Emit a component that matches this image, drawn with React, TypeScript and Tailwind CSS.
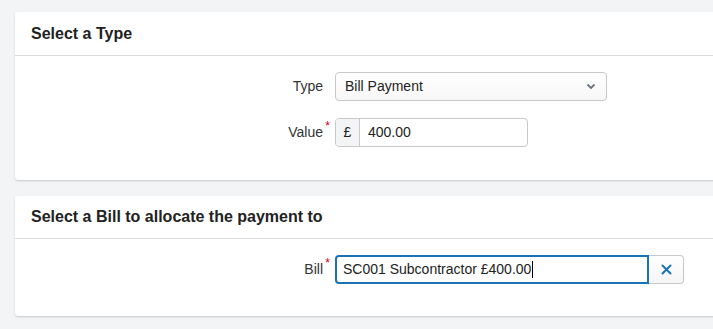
import React from "react";

const font = { fontFamily: '"Liberation Sans", Arial, sans-serif' };

function Label({ text, required }: { text: string; required?: boolean }) {
  return (
    <div className="w-[308px] shrink-0 text-right text-[14px] text-[#333]">
      <span className="relative">
        {text}
        {required && (
          <span className="absolute -right-[7px] -top-[7px] text-[12px] text-[#d0021b]">*</span>
        )}
      </span>
    </div>
  );
}

const App = () => {
  return (
    <div className="h-[329px] w-[713px] overflow-hidden bg-[#f3f4f6] pt-[12px]" style={font}>
      {/* 카드 1 */}
      <div className="ml-[15px] w-[720px] rounded-l-[3px] bg-white shadow-[0_1px_2px_rgba(0,0,0,0.18)]">
        <div className="flex h-[44px] items-center border-b border-[#dcdcdc] pl-[16px] text-[16px] font-bold text-[#222]">
          Select a Type
        </div>
        <div className="flex flex-col gap-[17px] pb-[33px] pt-[16px]">
          <div className="flex items-center gap-[12px]">
            <Label text="Type" />
            <div className="flex h-[29px] w-[272px] items-center justify-between rounded-[4px] border border-[#c8c8c8] bg-gradient-to-b from-white to-[#f7f7f7] pl-[9px] pr-[10px] text-[14px] text-[#222]">
              <span>Bill Payment</span>
              <svg width="10" height="7" viewBox="0 0 10 7">
                <path d="M1.5 1.5 L5 5 L8.5 1.5" fill="none" stroke="#6b7280" strokeWidth="1.8" />
              </svg>
            </div>
          </div>
          <div className="flex items-center gap-[12px]">
            <Label text="Value" required />
            <div className="flex h-[29px] w-[193px] overflow-hidden rounded-[4px] border border-[#c8c8c8] text-[14px] text-[#222]">
              <div className="flex w-[24px] items-center justify-center border-r border-[#c8c8c8] bg-[#f3f4f6]">£</div>
              <div className="flex flex-1 items-center pl-[8px]">400.00</div>
            </div>
          </div>
        </div>
      </div>

      {/* 카드 2 */}
      <div className="ml-[15px] mt-[16px] w-[720px] rounded-l-[3px] bg-white shadow-[0_1px_2px_rgba(0,0,0,0.18)]">
        <div className="flex h-[43px] items-center border-b border-[#dcdcdc] pl-[16px] text-[16px] font-bold text-[#222]">
          Select a Bill to allocate the payment to
        </div>
        <div className="pb-[32px] pt-[16px]">
          <div className="flex items-center gap-[12px]">
            <Label text="Bill" required />
            <div className="flex h-[29px]">
              <div className="flex w-[314px] items-center rounded-l-[4px] border-2 border-[#1a73b5] pl-[6px] text-[14px] text-[#222]">
                SC001 Subcontractor £400.00
                <span className="ml-[1px] inline-block h-[17px] w-[1px] bg-black" />
              </div>
              <div className="flex w-[35px] items-center justify-center rounded-r-[4px] border border-l-0 border-[#c8c8c8] bg-gradient-to-b from-white to-[#f5f5f5]">
                <svg width="11" height="11" viewBox="0 0 11 11">
                  <path d="M1.5 1.5 L9.5 9.5 M9.5 1.5 L1.5 9.5" stroke="#1a73b5" strokeWidth="2" strokeLinecap="round" />
                </svg>
              </div>
            </div>
          </div>
        </div>
      </div>
    </div>
  );
};

export default App;
